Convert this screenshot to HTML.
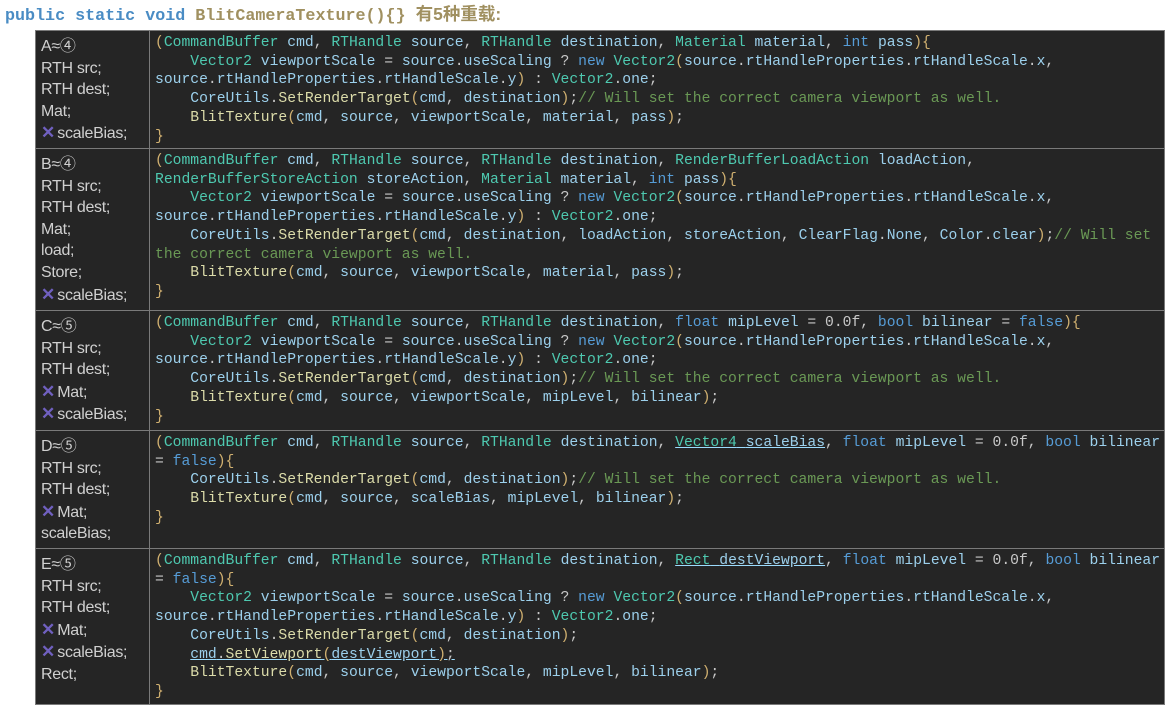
<!DOCTYPE html>
<html><head><meta charset="utf-8"><style>
body{margin:0;width:1167px;height:707px;background:#fff;overflow:hidden;position:relative}
.h{position:absolute;left:5px;top:1px;font:bold 16.7px "Liberation Mono",monospace;color:#4a8cc4;white-space:pre}
.h .g{color:#a09060}
.h .z{font-family:"Liberation Sans","Noto Sans CJK SC",sans-serif;font-weight:bold;color:#a09060;font-size:17.5px}
table{position:absolute;left:35px;top:30px;width:1130px;border-collapse:collapse;background:#252525;table-layout:fixed}
td{border:1px solid #7a7a7a;vertical-align:top;padding:0;overflow:hidden}
td.l{padding:5px 0 0 5px;font:16px/21.6px "Liberation Sans","Noto Sans CJK SC",sans-serif;color:#d0d0d0;letter-spacing:-0.3px}
td.c{padding:3px 0 0 5px}
pre{margin:0;font:14.7px/18.7px "Liberation Mono",monospace;color:#c8c8c8;white-space:pre}
.t{color:#4ec9b0}.v{color:#9cd0ec}.k{color:#569cd6}.f{color:#dcdcaa}.c{color:#6a9955}.b{color:#d0b070}
.u{text-decoration:underline;text-decoration-color:#9cdcfe}
.x{color:#7060c0;font-weight:bold;font-size:17px;letter-spacing:0;margin-right:2px}
</style></head><body>
<div class="h">public static void <span class="g">BlitCameraTexture(){}</span> <span class="z">有5种重载:</span></div>
<table>
<colgroup><col style="width:114px"><col></colgroup>
<tr style="height:118px"><td class="l">A≈④<br>RTH src;<br>RTH dest;<br>Mat;<br><span class="x">✕</span>scaleBias;</td><td class="c"><pre><span class="b">(</span><span class="t">CommandBuffer</span> <span class="v">cmd</span>, <span class="t">RTHandle</span> <span class="v">source</span>, <span class="t">RTHandle</span> <span class="v">destination</span>, <span class="t">Material</span> <span class="v">material</span>, <span class="k">int</span> <span class="v">pass</span><span class="b">){</span>
    <span class="t">Vector2</span> <span class="v">viewportScale</span> = <span class="v">source</span>.<span class="v">useScaling</span> ? <span class="k">new</span> <span class="t">Vector2</span><span class="b">(</span><span class="v">source</span>.<span class="v">rtHandleProperties</span>.<span class="v">rtHandleScale</span>.<span class="v">x</span>,
<span class="v">source</span>.<span class="v">rtHandleProperties</span>.<span class="v">rtHandleScale</span>.<span class="v">y</span><span class="b">)</span> : <span class="t">Vector2</span>.<span class="v">one</span>;
    <span class="v">CoreUtils</span>.<span class="f">SetRenderTarget</span><span class="b">(</span><span class="v">cmd</span>, <span class="v">destination</span><span class="b">)</span>;<span class="c">// Will set the correct camera viewport as well.</span>
    <span class="f">BlitTexture</span><span class="b">(</span><span class="v">cmd</span>, <span class="v">source</span>, <span class="v">viewportScale</span>, <span class="v">material</span>, <span class="v">pass</span><span class="b">)</span>;
<span class="b">}</span></pre></td></tr>
<tr style="height:162px"><td class="l">B≈④<br>RTH src;<br>RTH dest;<br>Mat;<br>load;<br>Store;<br><span class="x">✕</span>scaleBias;</td><td class="c"><pre><span class="b">(</span><span class="t">CommandBuffer</span> <span class="v">cmd</span>, <span class="t">RTHandle</span> <span class="v">source</span>, <span class="t">RTHandle</span> <span class="v">destination</span>, <span class="t">RenderBufferLoadAction</span> <span class="v">loadAction</span>,
<span class="t">RenderBufferStoreAction</span> <span class="v">storeAction</span>, <span class="t">Material</span> <span class="v">material</span>, <span class="k">int</span> <span class="v">pass</span><span class="b">){</span>
    <span class="t">Vector2</span> <span class="v">viewportScale</span> = <span class="v">source</span>.<span class="v">useScaling</span> ? <span class="k">new</span> <span class="t">Vector2</span><span class="b">(</span><span class="v">source</span>.<span class="v">rtHandleProperties</span>.<span class="v">rtHandleScale</span>.<span class="v">x</span>,
<span class="v">source</span>.<span class="v">rtHandleProperties</span>.<span class="v">rtHandleScale</span>.<span class="v">y</span><span class="b">)</span> : <span class="t">Vector2</span>.<span class="v">one</span>;
    <span class="v">CoreUtils</span>.<span class="f">SetRenderTarget</span><span class="b">(</span><span class="v">cmd</span>, <span class="v">destination</span>, <span class="v">loadAction</span>, <span class="v">storeAction</span>, <span class="v">ClearFlag</span>.<span class="v">None</span>, <span class="v">Color</span>.<span class="v">clear</span><span class="b">)</span>;<span class="c">// Will set</span>
<span class="c">the correct camera viewport as well.</span>
    <span class="f">BlitTexture</span><span class="b">(</span><span class="v">cmd</span>, <span class="v">source</span>, <span class="v">viewportScale</span>, <span class="v">material</span>, <span class="v">pass</span><span class="b">)</span>;
<span class="b">}</span></pre></td></tr>
<tr style="height:120px"><td class="l">C≈⑤<br>RTH src;<br>RTH dest;<br><span class="x">✕</span>Mat;<br><span class="x">✕</span>scaleBias;</td><td class="c"><pre><span class="b">(</span><span class="t">CommandBuffer</span> <span class="v">cmd</span>, <span class="t">RTHandle</span> <span class="v">source</span>, <span class="t">RTHandle</span> <span class="v">destination</span>, <span class="k">float</span> <span class="v">mipLevel</span> = 0.0f, <span class="k">bool</span> <span class="v">bilinear</span> = <span class="k">false</span><span class="b">){</span>
    <span class="t">Vector2</span> <span class="v">viewportScale</span> = <span class="v">source</span>.<span class="v">useScaling</span> ? <span class="k">new</span> <span class="t">Vector2</span><span class="b">(</span><span class="v">source</span>.<span class="v">rtHandleProperties</span>.<span class="v">rtHandleScale</span>.<span class="v">x</span>,
<span class="v">source</span>.<span class="v">rtHandleProperties</span>.<span class="v">rtHandleScale</span>.<span class="v">y</span><span class="b">)</span> : <span class="t">Vector2</span>.<span class="v">one</span>;
    <span class="v">CoreUtils</span>.<span class="f">SetRenderTarget</span><span class="b">(</span><span class="v">cmd</span>, <span class="v">destination</span><span class="b">)</span>;<span class="c">// Will set the correct camera viewport as well.</span>
    <span class="f">BlitTexture</span><span class="b">(</span><span class="v">cmd</span>, <span class="v">source</span>, <span class="v">viewportScale</span>, <span class="v">mipLevel</span>, <span class="v">bilinear</span><span class="b">)</span>;
<span class="b">}</span></pre></td></tr>
<tr style="height:118px"><td class="l">D≈⑤<br>RTH src;<br>RTH dest;<br><span class="x">✕</span>Mat;<br>scaleBias;</td><td class="c"><pre><span class="b">(</span><span class="t">CommandBuffer</span> <span class="v">cmd</span>, <span class="t">RTHandle</span> <span class="v">source</span>, <span class="t">RTHandle</span> <span class="v">destination</span>, <span class="u"><span class="t">Vector4</span> <span class="v">scaleBias</span></span>, <span class="k">float</span> <span class="v">mipLevel</span> = 0.0f, <span class="k">bool</span> <span class="v">bilinear</span>
= <span class="k">false</span><span class="b">){</span>
    <span class="v">CoreUtils</span>.<span class="f">SetRenderTarget</span><span class="b">(</span><span class="v">cmd</span>, <span class="v">destination</span><span class="b">)</span>;<span class="c">// Will set the correct camera viewport as well.</span>
    <span class="f">BlitTexture</span><span class="b">(</span><span class="v">cmd</span>, <span class="v">source</span>, <span class="v">scaleBias</span>, <span class="v">mipLevel</span>, <span class="v">bilinear</span><span class="b">)</span>;
<span class="b">}</span></pre></td></tr>
<tr style="height:156px"><td class="l">E≈⑤<br>RTH src;<br>RTH dest;<br><span class="x">✕</span>Mat;<br><span class="x">✕</span>scaleBias;<br>Rect;</td><td class="c"><pre><span class="b">(</span><span class="t">CommandBuffer</span> <span class="v">cmd</span>, <span class="t">RTHandle</span> <span class="v">source</span>, <span class="t">RTHandle</span> <span class="v">destination</span>, <span class="u"><span class="t">Rect</span> <span class="v">destViewport</span></span>, <span class="k">float</span> <span class="v">mipLevel</span> = 0.0f, <span class="k">bool</span> <span class="v">bilinear</span>
= <span class="k">false</span><span class="b">){</span>
    <span class="t">Vector2</span> <span class="v">viewportScale</span> = <span class="v">source</span>.<span class="v">useScaling</span> ? <span class="k">new</span> <span class="t">Vector2</span><span class="b">(</span><span class="v">source</span>.<span class="v">rtHandleProperties</span>.<span class="v">rtHandleScale</span>.<span class="v">x</span>,
<span class="v">source</span>.<span class="v">rtHandleProperties</span>.<span class="v">rtHandleScale</span>.<span class="v">y</span><span class="b">)</span> : <span class="t">Vector2</span>.<span class="v">one</span>;
    <span class="v">CoreUtils</span>.<span class="f">SetRenderTarget</span><span class="b">(</span><span class="v">cmd</span>, <span class="v">destination</span><span class="b">)</span>;
    <span class="u"><span class="v">cmd</span>.<span class="f">SetViewport</span><span class="b">(</span><span class="v">destViewport</span><span class="b">)</span>;</span>
    <span class="f">BlitTexture</span><span class="b">(</span><span class="v">cmd</span>, <span class="v">source</span>, <span class="v">viewportScale</span>, <span class="v">mipLevel</span>, <span class="v">bilinear</span><span class="b">)</span>;
<span class="b">}</span></pre></td></tr>
</table>
</body></html>
